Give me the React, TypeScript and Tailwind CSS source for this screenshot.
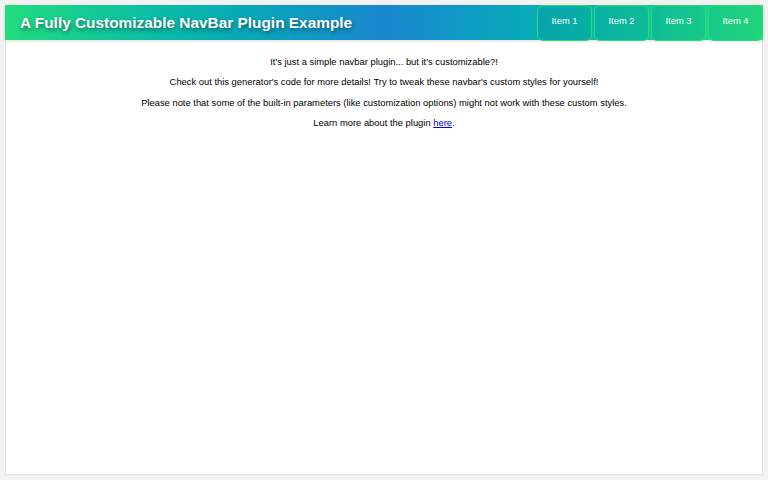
const items = ["Item 1", "Item 2", "Item 3", "Item 4"];

export default function App() {
  return (
    <div className="min-h-[480px] bg-[#f2f2f2] p-[5px] font-['Liberation_Sans',Arial,sans-serif]">
      <div className="flex h-[470px] flex-col border border-[#e2e2e2] bg-white">
        <nav className="-mx-px -mt-px flex h-[35px] items-stretch justify-between bg-gradient-to-r from-[#22dc7c] via-[#1a86cf] to-[#22e080] shadow-[0_1px_3px_rgba(0,0,0,0.15)]">
          <div className="flex items-center pl-[15px] text-[15.4px] font-bold text-white [text-shadow:1px_2px_4px_rgba(0,0,0,0.45)]">
            A Fully Customizable NavBar Plugin Example
          </div>
          <div className="flex gap-[2px]">
            {items.map((item) => (
              <div
                key={item}
                className="flex h-[36px] w-[55px] justify-center rounded-[6px] border border-[#28e070] bg-[rgba(0,0,0,0.05)] pt-[9px] text-[9.4px] leading-[11px] text-white"
              >
                {item}
              </div>
            ))}
          </div>
        </nav>
        <div className="flex flex-col items-center gap-[9.4px] pt-[16px] text-[9.4px] leading-[11px] text-black">
          <p>It's just a simple navbar plugin... but it's customizable?!</p>
          <p>Check out this generator's code for more details! Try to tweak these navbar's custom styles for yourself!</p>
          <p>Please note that some of the built-in parameters (like customization options) might not work with these custom styles.</p>
          <p>
            Learn more about the plugin{" "}
            <a href="#" className="text-[#0000ee] underline">
              here
            </a>
            .
          </p>
        </div>
      </div>
    </div>
  );
}
